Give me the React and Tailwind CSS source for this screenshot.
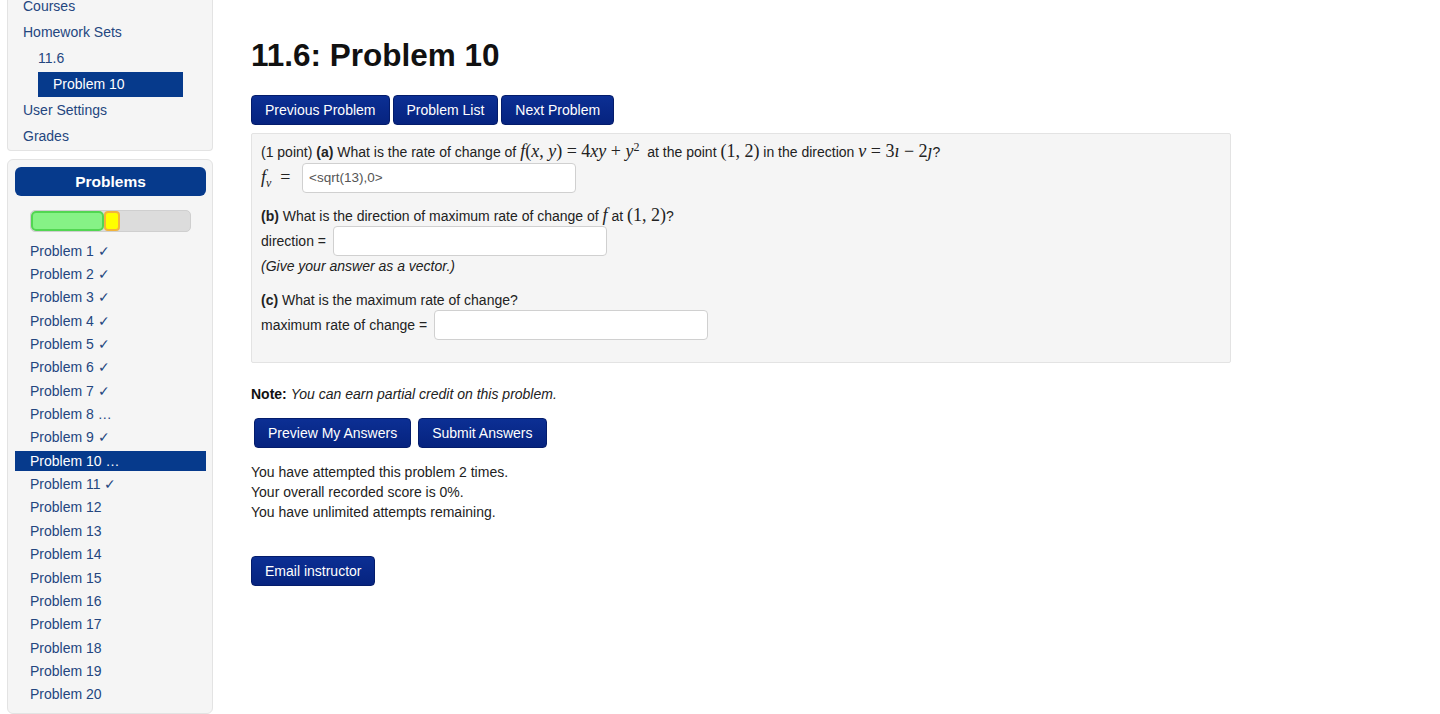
import React from "react";

const sans = { fontFamily: '"Liberation Sans", Arial, Helvetica, sans-serif' };
const serif = { fontFamily: '"Liberation Serif", "Times New Roman", serif' };

const problems = [
  { n: 1, s: "✓" },
  { n: 2, s: "✓" },
  { n: 3, s: "✓" },
  { n: 4, s: "✓" },
  { n: 5, s: "✓" },
  { n: 6, s: "✓" },
  { n: 7, s: "✓" },
  { n: 8, s: "…" },
  { n: 9, s: "✓" },
  { n: 10, s: "…", active: true },
  { n: 11, s: "✓" },
  { n: 12 },
  { n: 13 },
  { n: 14 },
  { n: 15 },
  { n: 16 },
  { n: 17 },
  { n: 18 },
  { n: 19 },
  { n: 20 },
];

function M({ children }) {
  return (
    <span className="text-[18px] leading-none italic" style={serif}>
      {children}
    </span>
  );
}

function R({ children }) {
  return (
    <span className="text-[18px] leading-none" style={serif}>
      {children}
    </span>
  );
}

function NavyButton({ children, className = "" }) {
  return (
    <button
      className={
        "h-[30px] px-[13px] rounded-[4px] border border-[#041c6b] bg-gradient-to-b from-[#0c2f94] to-[#06237f] text-white text-[14px] leading-none " +
        className
      }
    >
      {children}
    </button>
  );
}

function AnswerInput({ value = "", width = "w-[274px]" }) {
  return (
    <div
      className={
        width +
        " h-[30px] bg-white border border-[#d0d0d0] rounded-[4px] flex items-center px-[6px] text-[13.5px] text-[#555]"
      }
    >
      {value}
    </div>
  );
}

export default function App() {
  return (
    <div className="w-[1440px] h-[714px] overflow-hidden bg-white flex text-[#222]" style={sans}>
      {/* Sidebar */}
      <aside className="w-[206px] ml-[7px] shrink-0 flex flex-col gap-[8px] -mt-[7px]">
        <nav className="bg-[#f5f5f5] border border-[#e3e3e3] border-t-0 rounded-b-[4px] pb-[1px] text-[14px] text-[#24467f]">
          <div className="h-[26px] flex items-center pl-[15px]">Courses</div>
          <div className="h-[26px] flex items-center pl-[15px]">Homework Sets</div>
          <div className="h-[26px] flex items-center pl-[30px]">11.6</div>
          <div className="h-[26px] flex items-end pl-[30px]">
            <div className="w-[145px] h-[25px] bg-[#063a8c] text-white flex items-center pl-[15px]">Problem 10</div>
          </div>
          <div className="h-[26px] flex items-center pl-[15px]">User Settings</div>
          <div className="h-[26px] flex items-center pl-[15px]">Grades</div>
        </nav>

        <section className="bg-[#f5f5f5] border border-[#e3e3e3] rounded-[6px] pt-[7px] pl-[7px] pr-[6px] pb-[8px]">
          <div className="h-[29px] rounded-[6px] bg-[#063a8c] text-white font-bold text-[15.5px] flex items-center justify-center">
            Problems
          </div>
          <div className="ml-[15px] mt-[14px] w-[161px] h-[22px] rounded-[5px] bg-[#dcdcdc] border border-[#cfcfcf] flex overflow-hidden">
            <div className="w-[73px] h-full bg-[#86f286] border-2 border-[#52d652] rounded-[5px]" />
            <div className="w-[16px] h-full bg-[#ffff00] border-2 border-[#f2b43c] rounded-[4px]" />
          </div>
          <ul className="mt-[9px] flex flex-col gap-[3.37px] text-[14px] text-[#24467f]">
            {problems.map((p) => (
              <li
                key={p.n}
                className={
                  "h-[20px] flex items-center pl-[15px] " + (p.active ? "bg-[#063a8c] text-white" : "")
                }
              >
                Problem {p.n}
                {p.s ? " " + p.s : ""}
              </li>
            ))}
          </ul>
        </section>
      </aside>

      {/* Main content */}
      <main className="ml-[38px] flex flex-col">
        <h1 className="mt-[38px] text-[31.5px] font-bold leading-none text-[#111] h-[36px] flex items-center">
          11.6: Problem 10
        </h1>
        <div className="mt-[21px] flex gap-[3px]">
          <NavyButton>Previous Problem</NavyButton>
          <NavyButton>Problem List</NavyButton>
          <NavyButton>Next Problem</NavyButton>
        </div>

        <div className="mt-[8px] w-[980px] bg-[#f5f5f5] border border-[#e3e3e3] rounded-[2px] pl-[9px] pt-[8px] pb-[22px] text-[14px]">
          <p className="h-[20px] leading-[20px] whitespace-pre">
            (1 point) <b>(a)</b> What is the rate of change of <M>f</M>
            <R>(</R>
            <M>x</M>
            <R>, </R>
            <M>y</M>
            <R>) = 4</R>
            <M>xy</M>
            <R> + </R>
            <M>y</M>
            <span className="relative -top-[6px] text-[12px] leading-none" style={serif}>2</span>
            {"  at the point "}
            <R>(1, 2)</R>
            {" in the direction "}
            <M>v</M>
            <R> = 3</R>
            <M>ı</M>
            <R> − 2</R>
            <M>ȷ</M>?
          </p>
          <div className="mt-[1px] flex items-center gap-[7px]">
            <span className="whitespace-pre w-[34px]">
              <M>f</M>
              <span className="relative top-[4px] text-[12px] italic" style={serif}>v</span>
              <R>  =</R>
            </span>
            <AnswerInput value="<sqrt(13),0>" />
          </div>

          <p className="mt-[13px] h-[20px] leading-[20px] whitespace-pre">
            <b>(b)</b> What is the direction of maximum rate of change of <M>f</M> at <R>(1, 2)</R>?
          </p>
          <div className="flex items-center gap-[7px]">
            <span>direction =</span>
            <AnswerInput />
          </div>
          <p className="h-[20px] leading-[20px] italic">(Give your answer as a vector.)</p>

          <p className="mt-[14px] h-[20px] leading-[20px]">
            <b>(c)</b> What is the maximum rate of change?
          </p>
          <div className="flex items-center gap-[7px]">
            <span>maximum rate of change =</span>
            <AnswerInput />
          </div>
        </div>

        <p className="mt-[21px] h-[20px] leading-[20px] text-[14px]">
          <b className="text-[#111]">Note:</b> <i>You can earn partial credit on this problem.</i>
        </p>

        <div className="mt-[14px] ml-[3px] flex gap-[7px]">
          <NavyButton>Preview My Answers</NavyButton>
          <NavyButton>Submit Answers</NavyButton>
        </div>

        <div className="mt-[14px] text-[14px] leading-[20px]">
          <div>You have attempted this problem 2 times.</div>
          <div>Your overall recorded score is 0%.</div>
          <div>You have unlimited attempts remaining.</div>
        </div>

        <div className="mt-[34px]">
          <NavyButton>Email instructor</NavyButton>
        </div>
      </main>
    </div>
  );
}
